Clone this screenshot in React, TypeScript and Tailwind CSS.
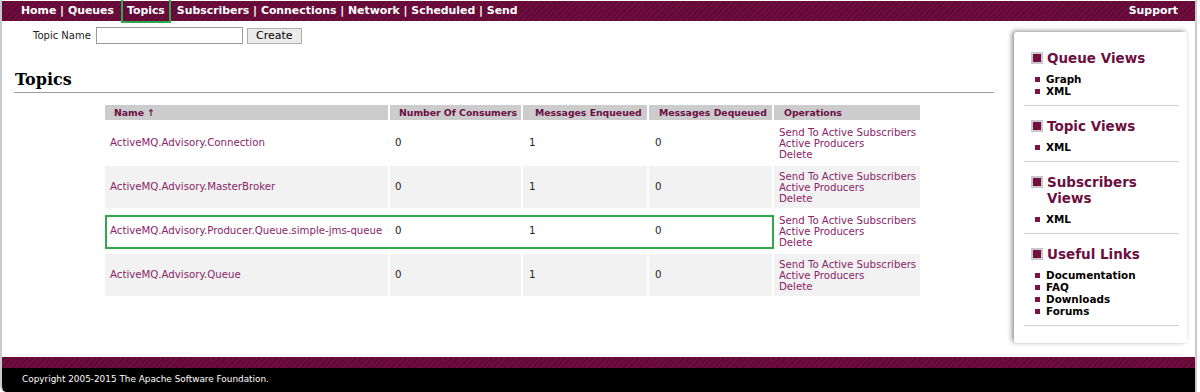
import * as React from "react";

const stripes =
  "bg-[repeating-linear-gradient(135deg,#6e0d3e_0px,#6e0d3e_2px,#620a36_2px,#620a36_4px)]";

interface TopicRow {
  name: string;
  consumers: number;
  enqueued: number;
  dequeued: number;
}

const topics: TopicRow[] = [
  { name: "ActiveMQ.Advisory.Connection", consumers: 0, enqueued: 1, dequeued: 0 },
  { name: "ActiveMQ.Advisory.MasterBroker", consumers: 0, enqueued: 1, dequeued: 0 },
  { name: "ActiveMQ.Advisory.Producer.Queue.simple-jms-queue", consumers: 0, enqueued: 1, dequeued: 0 },
  { name: "ActiveMQ.Advisory.Queue", consumers: 0, enqueued: 1, dequeued: 0 },
];

const sections = [
  { title: ["Queue Views"], items: ["Graph", "XML"] },
  { title: ["Topic Views"], items: ["XML"] },
  { title: ["Subscribers", "Views"], items: ["XML"] },
  { title: ["Useful Links"], items: ["Documentation", "FAQ", "Downloads", "Forums"] },
];

function Sidebar() {
  return (
    <div className="mt-[11px] w-[173px] h-[311px] bg-white rounded-[3px] shadow-[-2px_-1px_5px_rgba(0,0,0,0.45)] pt-[6px]">
      {sections.map((s, i) => (
        <div key={i}>
          <div className="pt-[12px] pl-[17px]">
            <div className="flex items-start gap-[4px]">
              <span className="mt-[2px] w-[12px] h-[12px] shrink-0 border-2 border-[#c8c8c8] bg-[repeating-linear-gradient(135deg,#7a1447_0px,#7a1447_2px,#6a0d3c_2px,#6a0d3c_4px)]" />
              <div className="text-[13.5px] leading-[16px] font-bold text-[#6b0f3f]">
                {s.title.map((t) => (
                  <div key={t}>{t}</div>
                ))}
              </div>
            </div>
            <ul className="mt-[7px] mb-[8px]">
              {s.items.map((it) => (
                <li key={it} className="flex items-center text-[10.4px] leading-[12px] font-bold text-black">
                  <span className="ml-[4px] mr-[6px] w-[5px] h-[5px] bg-[#7a1447]" />
                  {it}
                </li>
              ))}
            </ul>
          </div>
          <div className="ml-[10px] mr-[8px] border-t border-[#cfcfcf]" />
        </div>
      ))}
    </div>
  );
}

export default function App() {
  return (
    <div className="w-[1197px] h-[392px] flex flex-col bg-white border-x-2 border-[#cacaca] rounded-bl-[6px] overflow-hidden font-['DejaVu_Sans',Verdana,sans-serif]">
      {/* Top navigation */}
      <div className={`mt-[1px] h-[20px] flex items-center justify-between pl-[19px] pr-[17px] text-white text-[10.9px] font-bold ${stripes}`}>
        <div className="flex items-center whitespace-pre">
          <span>Home | Queues</span>
          <span className="relative ml-[13px] mr-[12px]">
            Topics
            <span className="absolute -left-[6px] -right-[6px] -top-[6px] -bottom-[4px] border-2 border-[#2ea84a]" />
          </span>
          <span>Subscribers | Connections | Network | Scheduled | Send</span>
        </div>
        <span>Support</span>
      </div>

      {/* Body */}
      <div className="flex flex-1">
        <div className="w-[1012px]">
          <form className="flex items-center pt-[6px] pl-[31px] text-[10px] text-[#222]">
            <label className="mr-[5px]">Topic Name</label>
            <input className="w-[147px] h-[17px] border border-[#9a9a9a] bg-white" />
            <button
              type="button"
              className="ml-[4px] w-[55px] h-[16px] border border-[#adadad] bg-[#ebebeb] text-[11px] leading-[14px] text-black"
            >
              Create
            </button>
          </form>

          <h2 className="mt-[26px] ml-[12px] mr-[20px] pl-[1px] pb-[2px] border-b border-[#a0a0a0] font-['DejaVu_Serif',serif] font-bold text-[16px] leading-[20px] text-black">
            Topics
          </h2>

          <div className="relative mt-[10px] ml-[101px] w-[819px]">
            <table className="table-fixed border-separate border-spacing-[2px] w-[819px] text-left">
              <colgroup>
                <col className="w-[283px]" />
                <col className="w-[131px]" />
                <col className="w-[124px]" />
                <col className="w-[123px]" />
                <col className="w-[146px]" />
              </colgroup>
              <thead>
                <tr className="bg-[#cccccc] text-[9.3px] font-bold text-[#6b0f45] h-[15px]">
                  <th className="pl-[9px] p-0">Name ↑</th>
                  <th className="pl-[9px] p-0">Number Of Consumers</th>
                  <th className="pl-[12px] p-0">Messages Enqueued</th>
                  <th className="pl-[10px] p-0">Messages Dequeued</th>
                  <th className="pl-[10px] p-0">Operations</th>
                </tr>
              </thead>
              <tbody className="text-[10.2px]">
                {topics.map((t, i) => (
                  <tr key={t.name} className={`h-[42px] ${i % 2 === 1 ? "bg-[#f2f2f2]" : "bg-white"}`}>
                    <td className="pl-[5px] text-[#8a2468] whitespace-nowrap">{t.name}</td>
                    <td className="pl-[5px] text-[#222]">{t.consumers}</td>
                    <td className="pl-[6px] text-[#222]">{t.enqueued}</td>
                    <td className="pl-[6px] text-[#222]">{t.dequeued}</td>
                    <td className="pl-[5px] text-[#8a2468] leading-[11px] whitespace-nowrap">
                      <div>Send To Active Subscribers</div>
                      <div>Active Producers</div>
                      <div>Delete</div>
                    </td>
                  </tr>
                ))}
              </tbody>
            </table>
            <div className="absolute left-[2px] top-[112px] w-[669px] h-[34px] border-2 border-[#2ea84a]" />
          </div>
        </div>

        <Sidebar />
      </div>

      {/* Footer */}
      <div className={`h-[11px] ${stripes}`} />
      <div className="h-[24px] bg-black text-white text-[8.9px] pl-[20px] pt-[5px]">
        Copyright 2005-2015 The Apache Software Foundation.
      </div>
    </div>
  );
}
